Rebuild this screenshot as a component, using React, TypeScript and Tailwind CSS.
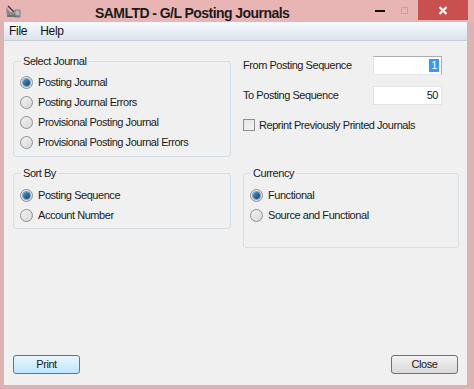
import React from "react";

const font = { fontFamily: '"Liberation Sans", Arial, sans-serif' };

function Radio({ checked, label }: { checked?: boolean; label: string }) {
  return (
    <div className="flex h-5 items-center">
      <span className="relative flex h-[13px] w-[13px] items-center justify-center rounded-full border border-[#8e8f8f] bg-gradient-to-br from-[#f4f4f4] to-[#d6d6d6]">
        {checked && (
          <span className="h-[7px] w-[7px] rounded-full bg-gradient-to-br from-[#4a9ad6] to-[#123f6e] shadow-[0_0_0_1px_#7f9fbd]" />
        )}
      </span>
      <span className="ml-[5px] text-[11px] tracking-[-0.45px] text-[#1a1a1a]">{label}</span>
    </div>
  );
}

function Group({ title, className, children }: { title: string; className: string; children: React.ReactNode }) {
  return (
    <fieldset className={`rounded-[3px] border border-[#d5dfe5] pl-[6px] ${className}`}>
      <legend className="ml-[1px] px-[2px] text-[11px] leading-[13px] tracking-[-0.45px] text-[#1a1a1a]">{title}</legend>
      {children}
    </fieldset>
  );
}

export default function App() {
  return (
    <div className="flex h-[389px] w-[474px] flex-col bg-[#dcb3b2]" style={font}>
      {/* title bar */}
      <div className="relative flex h-[22px] items-center bg-[#e8b5b4]">
        <svg className="ml-[5px] h-[14px] w-[16px]" viewBox="0 0 16 14">
          <path d="M1 3 L5 8 L11 9 L13 13 L2 13 Z" fill="#8a8a8a" />
          <path d="M3 2 L9 8" stroke="#3a3a3a" strokeWidth="1.4" />
          <rect x="10" y="6" width="5" height="7" fill="#b9b9b9" stroke="#6f6f6f" strokeWidth="0.8" />
          <path d="M2 12 L14 12" stroke="#555" strokeWidth="1" />
        </svg>
        <div className="absolute left-[95px] top-[3px] text-[14px] font-bold tracking-[-0.55px] text-[#1c1c1c]">
          SAMLTD - G/L Posting Journals
        </div>
        <div className="absolute left-[375px] top-[10px] h-[2px] w-[10px] bg-[#111]" />
        <div className="absolute left-[401px] top-[7px] h-[7px] w-[7px] border border-[#d49c9c]" />
        <div className="absolute left-[418px] top-0 flex h-[20px] w-[50px] items-center justify-center bg-[#c9504e]">
          <svg width="10" height="9" viewBox="0 0 10 9">
            <path d="M1.5 1 L8.5 8 M8.5 1 L1.5 8" stroke="#fff" strokeWidth="2.2" />
          </svg>
        </div>
      </div>
      <div className="flex flex-1 flex-col pb-[4px] pl-[4px] pr-[7px]">
        {/* menu bar */}
        <div className="flex h-[19px] items-center gap-[13px] border-b border-[#c8cdd4] bg-gradient-to-b from-[#f7f9fc] to-[#dae3ef] pl-[5px] text-[12px] tracking-[-0.3px] text-[#111]">
          <span>File</span>
          <span>Help</span>
        </div>
        {/* content */}
        <div className="flex flex-1 flex-col bg-[#f0f0f0] pl-[9px] pr-[8px] pt-[14px]">
          <div className="flex gap-[12px]">
            <div className="flex w-[219px] flex-col">
              <Group title="Select Journal" className="h-[102px] pt-[4px]">
                <Radio checked label="Posting Journal" />
                <Radio label="Posting Journal Errors" />
                <Radio label="Provisional Posting Journal" />
                <Radio label="Provisional Posting Journal Errors" />
              </Group>
              <Group title="Sort By" className="mt-[10px] h-[62px] pt-[5px]">
                <Radio checked label="Posting Sequence" />
                <Radio label="Account Number" />
              </Group>
            </div>
            <div className="flex w-[217px] flex-col">
              <div className="h-[112px] pt-[1px] text-[11px] tracking-[-0.45px] text-[#1a1a1a]">
                <div className="flex h-[19px] items-center">
                  <span className="w-[130px]">From Posting Sequence</span>
                  <div className="flex h-[19px] w-[69px] items-center justify-end border border-[#abadb3] border-l-[#e2e3ea] border-b-[#e3e9ef] bg-white pr-[2px]">
                    <span className="bg-[#3399ff] px-[2px] leading-[13px] text-white">1</span>
                  </div>
                </div>
                <div className="mt-[11px] flex h-[19px] items-center">
                  <span className="w-[130px]">To Posting Sequence</span>
                  <div className="flex h-[19px] w-[69px] items-center justify-end border border-[#e3e3e3] bg-white pr-[3px]">
                    <span>50</span>
                  </div>
                </div>
                <div className="mt-[12px] flex items-center">
                  <span className="h-[12px] w-[12px] border border-[#8e8f8f] bg-gradient-to-br from-[#e4e4e4] to-[#f6f6f6]" />
                  <span className="ml-[4px]">Reprint Previously Printed Journals</span>
                </div>
              </div>
              <Group title="Currency" className="h-[81px] pt-[5px]">
                <Radio checked label="Functional" />
                <Radio label="Source and Functional" />
              </Group>
            </div>
          </div>
          <div className="mt-auto mb-[11px] flex justify-between pr-[1px] text-[11px] tracking-[-0.45px] text-[#1a1a1a]">
            <button className="h-[19px] w-[67px] rounded-[3px] border border-[#3c7fb1] bg-gradient-to-b from-[#eaf6fd] to-[#bee6fd]">
              Print
            </button>
            <button className="h-[19px] w-[67px] rounded-[3px] border border-[#707070] bg-gradient-to-b from-[#f2f2f2] to-[#d9d9d9]">
              Close
            </button>
          </div>
        </div>
      </div>
    </div>
  );
}
